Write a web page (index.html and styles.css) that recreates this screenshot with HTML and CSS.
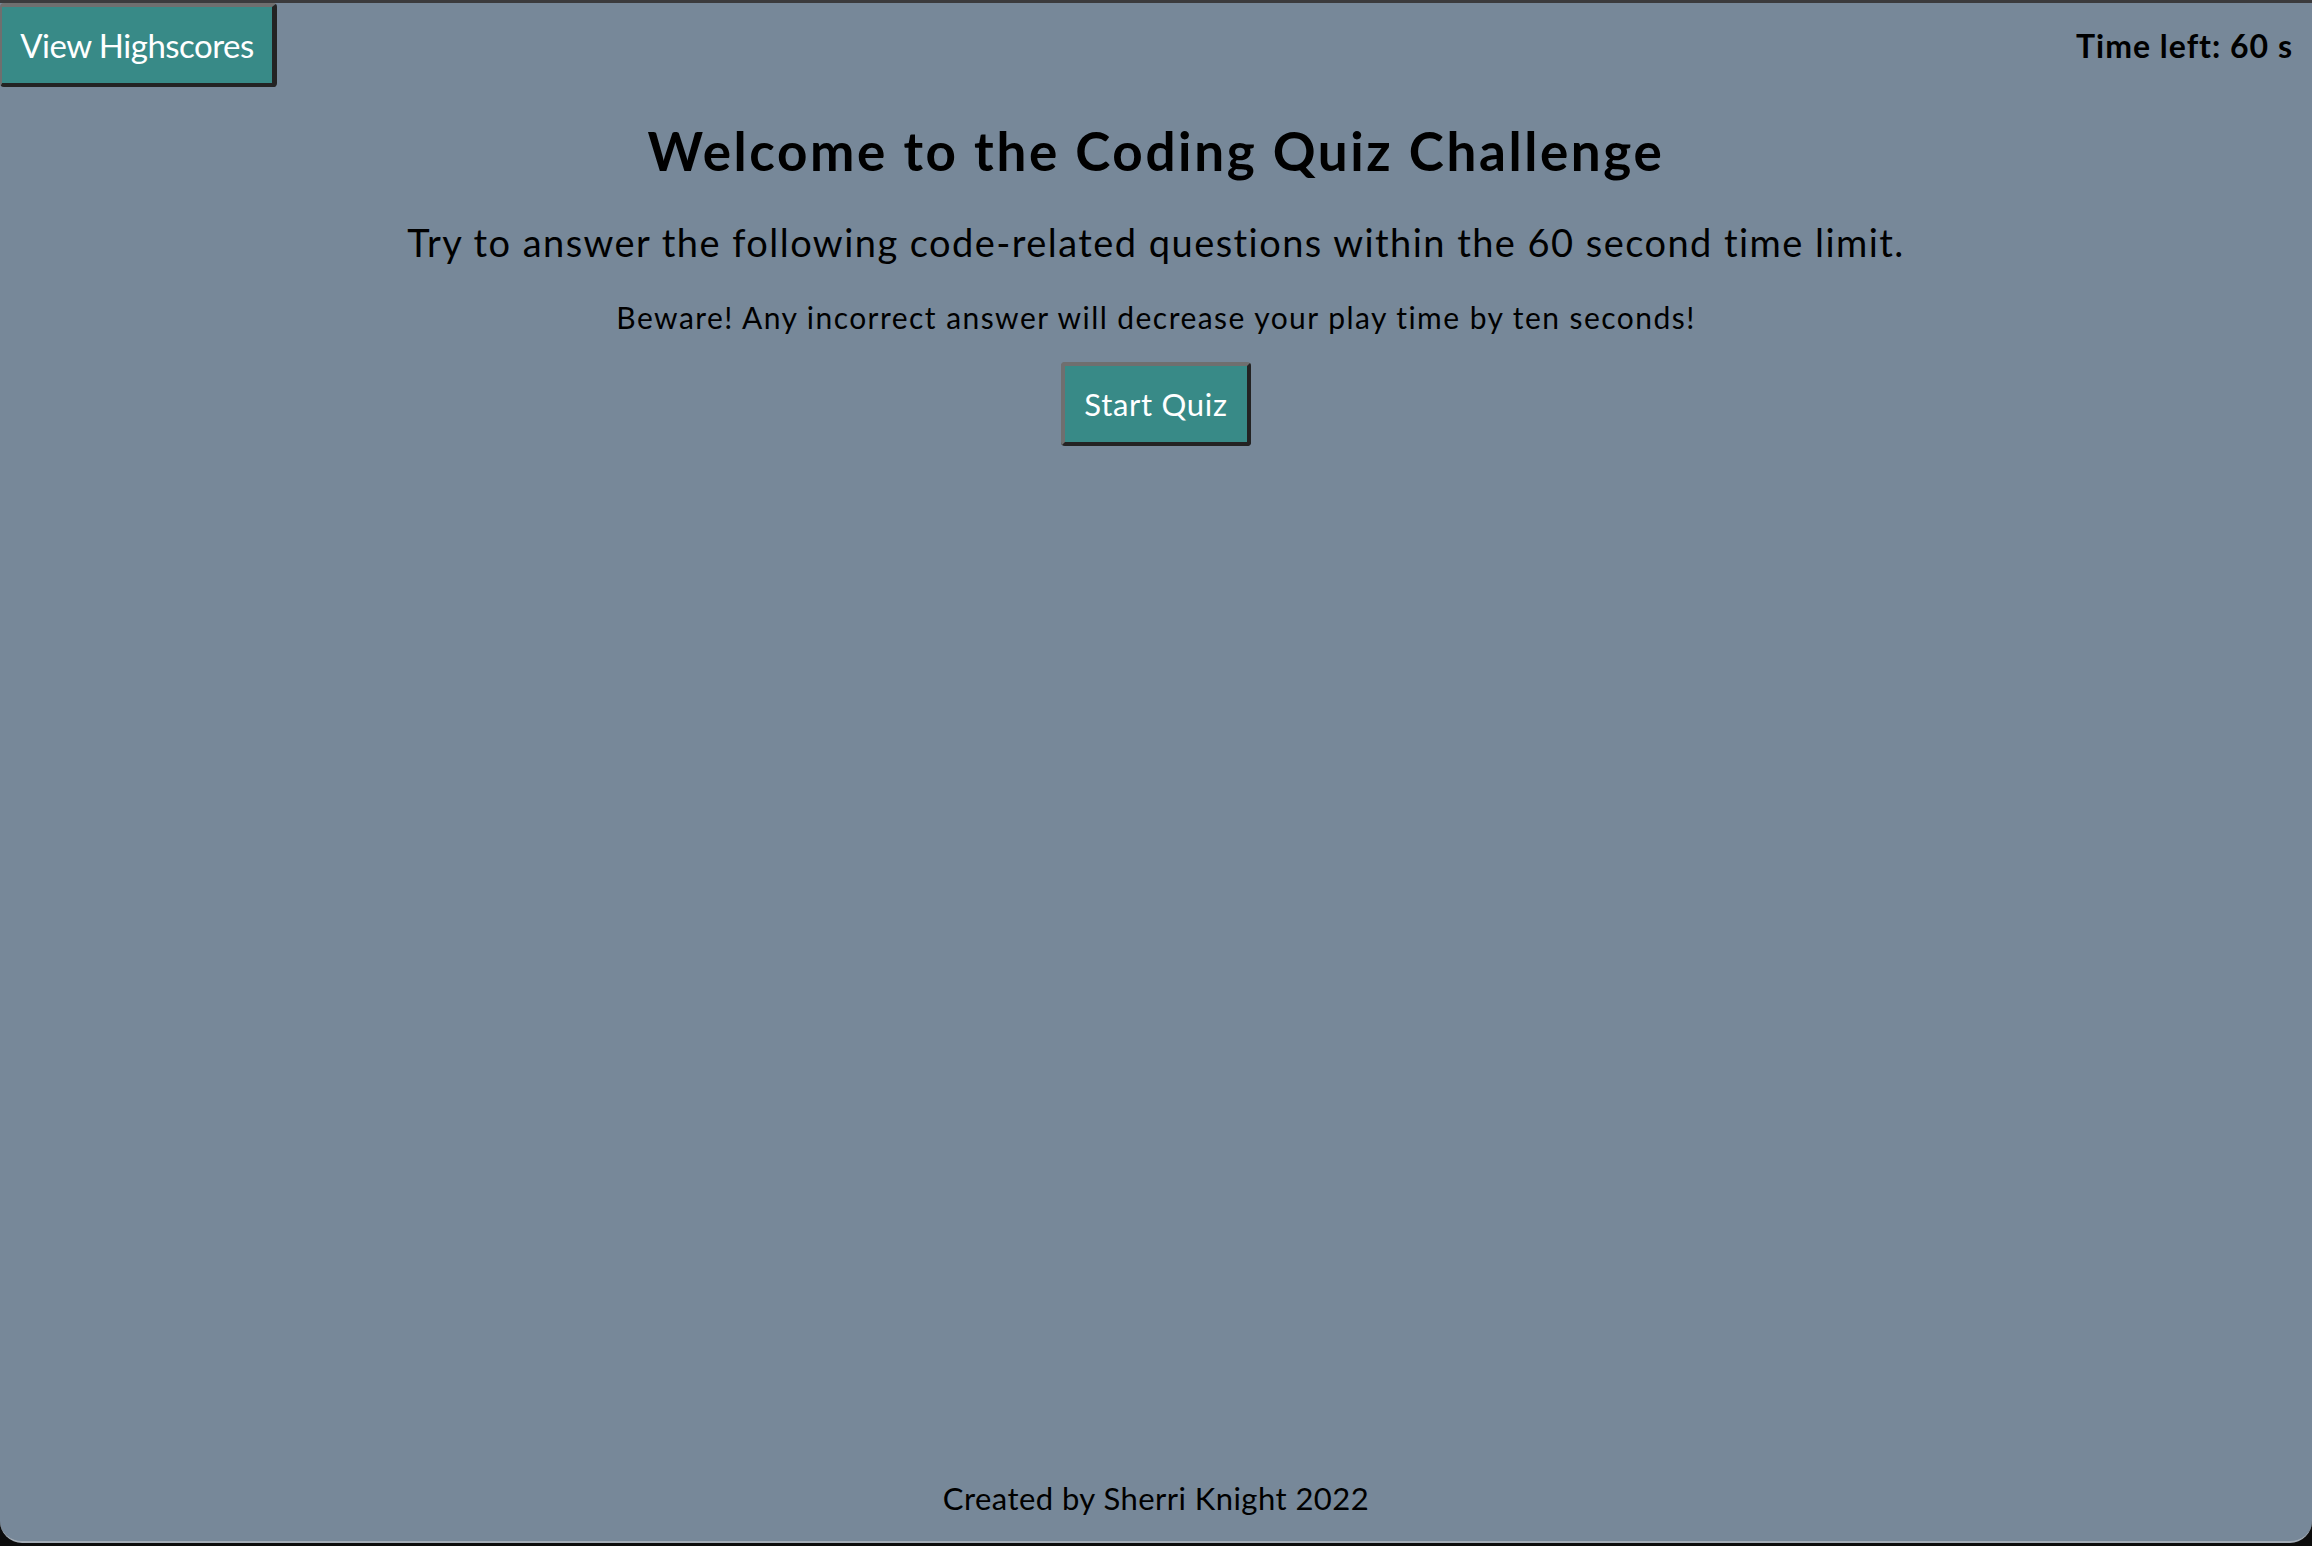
FILE: index.html
```html
<!DOCTYPE html>
<html lang="en">
<head>
<meta charset="utf-8">
<title>Coding Quiz Challenge</title>
<link rel="stylesheet" href="styles.css">
</head>
<body>
<div class="page">
  <header class="topbar">
    <button class="btn btn-scores">View Highscores</button>
    <div class="timer">Time left: 60 s</div>
  </header>
  <main class="intro">
    <h1 class="title">Welcome to the Coding Quiz Challenge</h1>
    <p class="lead">Try to answer the following code-related questions within the 60 second time limit.</p>
    <p class="warn">Beware! Any incorrect answer will decrease your play time by ten seconds!</p>
    <button class="btn btn-start">Start Quiz</button>
  </main>
  <footer class="footer">Created by Sherri Knight 2022</footer>
</div>
</body>
</html>
```

FILE: styles.css
```css
html {
  margin: 0;
  padding: 0;
  background: #0c0c0c;
  height: 100%;
}
body {
  margin: 0;
  padding: 0;
  height: 100%;
  font-family: "Trebuchet MS", Lato, "Open Sans", sans-serif;
  color: #000;
}
.page {
  box-sizing: border-box;
  height: 1543px;
  background: #778899;
  border-top: 3px solid #3b3b3d;
  border-bottom: 2px solid #a3acb6;
  border-radius: 0 0 22px 22px;
  display: flex;
  flex-direction: column;
}
.topbar {
  display: flex;
  justify-content: space-between;
  align-items: center;
}
.btn {
  font-family: inherit;
  color: #fff;
  background: #388a87;
  border-style: solid;
  border-color: #6f6f6f #232323 #232323 #6f6f6f;
  border-radius: 4px;
  cursor: pointer;
}
.btn-scores {
  height: 84px;
  width: 277px;
  border-width: 4px 5px 4px 2px;
  font-size: 33px;
  letter-spacing: -0.5px;
  padding: 0;
}
.timer {
  font-weight: bold;
  font-size: 32px;
  letter-spacing: 1px;
  padding-right: 19px;
}
.intro {
  flex: 1;
  display: flex;
  flex-direction: column;
  align-items: center;
  text-align: center;
}
.title {
  font-size: 53px;
  line-height: 64px;
  letter-spacing: 2.6px;
  margin: 32px 0 0;
}
.lead {
  font-size: 38px;
  line-height: 46px;
  letter-spacing: 1.45px;
  margin: 36px 0 0;
}
.warn {
  font-size: 30px;
  line-height: 36px;
  letter-spacing: 1.45px;
  margin: 34px 0 0;
}
.btn-start {
  margin-top: 27px;
  width: 190px;
  height: 84px;
  border-width: 4px;
  font-size: 31px;
  letter-spacing: 0.7px;
  padding: 0;
}
.footer {
  text-align: center;
  font-size: 31px;
  line-height: 37px;
  letter-spacing: 0.45px;
  padding-bottom: 24px;
}
```
